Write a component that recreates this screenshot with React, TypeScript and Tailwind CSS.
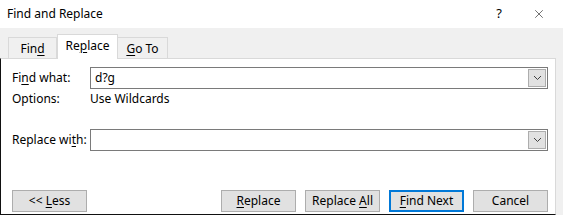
import { X } from "lucide-react"

const font = { fontFamily: "'Noto Sans', 'Open Sans', sans-serif" }

const U = ({ children }: { children: string }) => <span className="underline underline-offset-2">{children}</span>

const Combo = ({ value }: { value: string }) => (
  <div className="flex h-[22px] flex-1 items-center border border-[#7a7a7a] bg-white pl-[4px] pr-[1px]">
    <span className="flex-1 text-[12px] text-black">{value}</span>
    <div className="flex h-[18px] w-[18px] items-center justify-center border border-[#adadad] bg-[#e1e1e1]">
      <svg width="9" height="6" viewBox="0 0 9 6" fill="none">
        <path d="M1 1 L4.5 4.5 L8 1" stroke="#404040" strokeWidth="1" />
      </svg>
    </div>
  </div>
)

const Btn = ({ children, primary }: { children: React.ReactNode; primary?: boolean }) => (
  <div
    className={
      "flex h-[22px] w-[75px] items-center justify-center bg-[#e1e1e1] text-[12px] text-black " +
      (primary ? "border-2 border-[#0078d7]" : "border border-[#adadad]")
    }
  >
    <span className="whitespace-pre">{children}</span>
  </div>
)

export default function App() {
  return (
    <div style={font} className="flex h-[215px] w-[563px] flex-col overflow-hidden bg-[#f0f0f0] text-[12px] text-black">
      <div className="flex h-[28px] items-center bg-white pl-[7px] pr-[17px]">
        <span className="flex-1 text-[12px]">Find and Replace</span>
        <span className="mr-[30px] text-[13px]">?</span>
        <X size={14} strokeWidth={1.1} color="#222" />
      </div>
      <div className="flex h-[30px] items-end pl-[8px]">
        <div className="mb-[-1px] flex h-[22px] w-[49px] items-center justify-center border border-b-0 border-[#d9d9d9] bg-[#f0f0f0]">
          <span>Fin<U>d</U></span>
        </div>
        <div className="relative z-10 mb-[-1px] flex h-[25px] w-[61px] items-center justify-center border border-b-0 border-[#d9d9d9] bg-white pb-[2px]">
          <span>Re<U>p</U>lace</span>
        </div>
        <div className="mb-[-1px] flex h-[22px] w-[50px] items-center justify-center border border-b-0 border-l-0 border-[#d9d9d9] bg-[#f0f0f0]">
          <span><U>G</U>o To</span>
        </div>
      </div>
      <div className="mr-[7px] flex flex-1 flex-col border border-[#d9d9d9] border-b-[#111] border-l-[#111] bg-white pl-[11px] pr-[7px] pt-[8px]">
        <div className="flex items-center">
          <span className="w-[78px]">
            Fi<U>n</U>d what:
          </span>
          <Combo value="d?g" />
        </div>
        <div className="mt-[1px] flex h-[18px] items-center">
          <span className="w-[78px]">Options:</span>
          <span>Use Wildcards</span>
        </div>
        <div className="mt-[21px] flex items-center">
          <span className="w-[78px]">
            Replace wi<U>t</U>h:
          </span>
          <Combo value="" />
        </div>
        <div className="mt-[39px] flex items-center">
          <Btn>
            {"<< "}<U>L</U>ess
          </Btn>
          <div className="flex-1" />
          <div className="flex gap-[9px]">
            <Btn>
              <U>R</U>eplace
            </Btn>
            <Btn>
              {"Replace "}<U>A</U>ll
            </Btn>
            <Btn primary>
              <U>F</U>ind Next
            </Btn>
            <Btn>Cancel</Btn>
          </div>
        </div>
      </div>
    </div>
  )
}
